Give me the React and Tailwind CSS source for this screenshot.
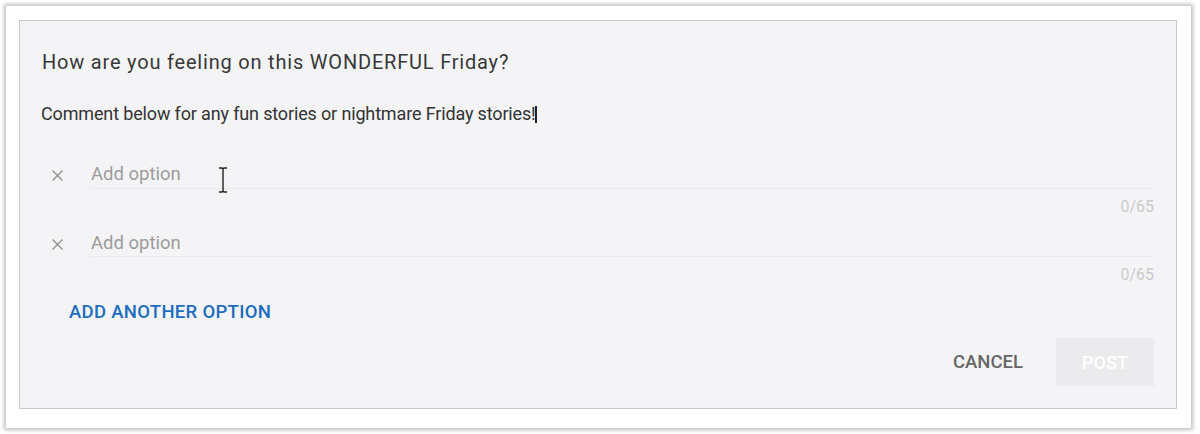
import React from 'react';

const OptionRow = ({ showCursor, first }) => (
  <div className={first ? 'mt-[42px]' : 'mt-[19px]'}>
    <div className="flex items-start">
      <div className="w-[70px] flex justify-end pr-[28px] pt-[5px]">
        <svg width="11" height="11" viewBox="0 0 11 11" className="text-[#8e8e8e]">
          <path d="M0.5 0.5 L10.5 10.5 M10.5 0.5 L0.5 10.5" stroke="currentColor" strokeWidth="1.3" />
        </svg>
      </div>
      <div className="flex-1 border-b border-[#ebebee] pb-[4px] relative">
        <span className="block text-[18.5px] text-[#9c9c9c] leading-none">Add option</span>
        {showCursor && (
          <svg width="12" height="26" viewBox="0 0 12 26" className="absolute left-[126px] top-[2px]">
            <path d="M2 1 H5 L6 2 L7 1 H10 M6 2 V24 M2 25 H5 L6 24 L7 25 H10" stroke="#222" strokeWidth="1.4" fill="none" />
          </svg>
        )}
      </div>
    </div>
    <div className="text-right text-[16px] text-[#cacacc] mt-[10px] leading-none">0/65</div>
  </div>
);

export default function App() {
  return (
    <div className="w-[1200px] h-[434px] bg-white p-[6px] pr-[9px]" style={{ fontFamily: 'Roboto, "Noto Sans", sans-serif' }}>
      <div className="h-full bg-white shadow-[0_0_4px_2px_rgba(0,0,0,0.25)] pt-[14px] pl-[13px] pr-[14px] pb-[19px]">
        <div className="h-full bg-[#f4f4f6] border border-[#c9c9c9] pl-[22px] pr-[22px] pt-[31px]">
          <h1 className="text-[20px] text-[#383838] leading-none tracking-[0.8px]">How are you feeling on this WONDERFUL Friday?</h1>
          <p className="text-[18px] text-[#333] mt-[33px] leading-none tracking-[-0.15px] flex items-center ml-[-1px]">
            Comment below for any fun stories or nightmare Friday stories!
            <span className="inline-block w-[2px] h-[17px] bg-[#222] ml-[-1px]"></span>
          </p>
          <div className="ml-[-21px]">
            <OptionRow first showCursor />
            <OptionRow />
          </div>
          <div className="flex flex-col">
            <div className="mt-[18px] pl-[27px]">
              <button className="text-[18.5px] font-medium text-[#1c6cc0] leading-none tracking-[0.3px]">ADD ANOTHER OPTION</button>
            </div>
            <div className="flex justify-end items-center gap-[33px] mt-[13px]">
              <button className="text-[18.5px] font-medium text-[#666] leading-none">CANCEL</button>
              <button className="w-[98px] h-[48px] bg-[#ebebed] text-white text-[18px] font-medium">POST</button>
            </div>
          </div>
        </div>
      </div>
    </div>
  );
}
